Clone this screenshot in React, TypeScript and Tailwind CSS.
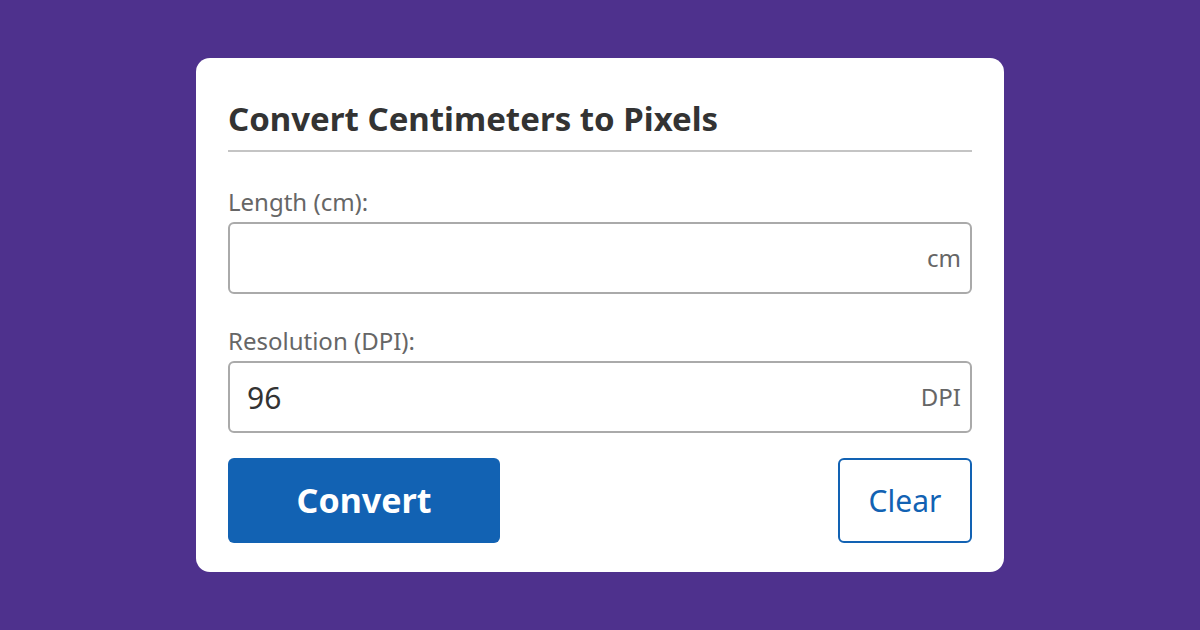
export default function App() {
  return (
    <div
      className="w-[1200px] h-[630px] bg-[#4e318d] flex items-center justify-center"
      style={{ fontFamily: '"Noto Sans", "Open Sans", sans-serif' }}
    >
      <div className="w-[808px] h-[514px] bg-white rounded-[14px] px-[32px] pt-[41px]">
        <h1 className="text-[33px] leading-[40px] font-bold text-[#333] pb-[11px] border-b-2 border-[#c4c4c4]">
          Convert Centimeters to Pixels
        </h1>

        <label className="block mt-[35px] text-[24px] leading-[30px] text-[#666]">Length (cm):</label>
        <div className="mt-[5px] h-[72px] rounded-[6px] border-2 border-[#aaa] flex items-center pl-[17px] pr-[9px]">
          <div className="flex-1" />
          <span className="text-[24px] text-[#666]">cm</span>
        </div>

        <label className="block mt-[32px] text-[24px] leading-[30px] text-[#666]">Resolution (DPI):</label>
        <div className="mt-[5px] h-[72px] rounded-[6px] border-2 border-[#aaa] flex items-center pl-[17px] pr-[9px]">
          <span className="flex-1 text-[30px] text-[#333]">96</span>
          <span className="text-[24px] text-[#666]">DPI</span>
        </div>

        <div className="mt-[25px] flex justify-between">
          <button className="w-[272px] h-[85px] rounded-[6px] bg-[#1262b3] text-white text-[34px] font-bold">
            Convert
          </button>
          <button className="w-[134px] h-[85px] rounded-[6px] border-2 border-[#1262b3] text-[#1262b3] text-[30px]">
            Clear
          </button>
        </div>
      </div>
    </div>
  );
}
